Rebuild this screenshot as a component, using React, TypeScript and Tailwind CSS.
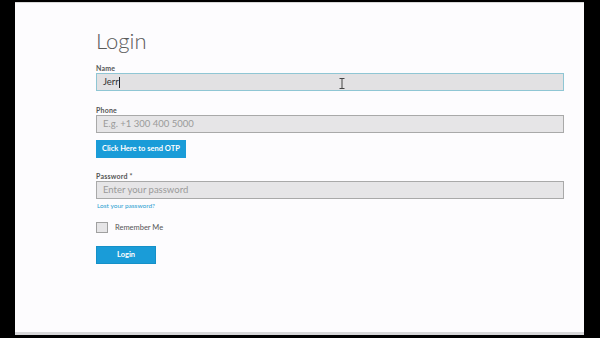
import React from "react";

function Field({ label, children }: { label: string; children: React.ReactNode }) {
  return (
    <div className="flex flex-col">
      <label className="text-[7px] font-bold leading-[8px] text-[#555] tracking-[0.2px]">{label}</label>
      {children}
    </div>
  );
}

export default function App() {
  return (
    <div className="w-[600px] h-[338px] bg-black pl-[15px] pr-[16px] pt-[2px] pb-[3px] font-['Lato','Open_Sans',sans-serif]">
      <div className="relative h-full bg-[#fdfcfe] border-t border-[#d8d8d8] border-b-[3px] border-b-[#d6d6d8] pl-[81px] pr-[20px]">
        <h1 className="mt-[25px] text-[22px] leading-[26px] font-light text-[#5a5a5a]">Login</h1>

        <div className="mt-[10px]">
          <Field label="Name">
            <div className="mt-[1px] h-[18px] bg-[#e2e1e3] border border-[#8fc6d4] flex items-center px-[6px] text-[9.5px] text-[#333]">
              Jerr<span className="inline-block w-px h-[11px] bg-[#222] ml-[0.5px]" />
            </div>
          </Field>
        </div>

        <div className="mt-[15px]">
          <Field label="Phone">
            <div className="mt-[1px] h-[18px] bg-[#e6e5e7] border border-[#a9a9a9] flex items-center px-[6px] text-[9.5px] text-[#9a9a9a]">
              E.g. +1 300 400 5000
            </div>
          </Field>
        </div>

        <button className="mt-[5px] h-[18px] px-[6px] bg-[#1a9cd8] text-white text-[7.5px] font-bold">
          Click Here to send OTP
        </button>

        <div className="mt-[14px]">
          <Field label="Password *">
            <div className="mt-[1px] h-[18px] bg-[#e6e5e7] border border-[#a9a9a9] flex items-center px-[6px] text-[9.5px] text-[#9a9a9a]">
              Enter your password
            </div>
          </Field>
        </div>

        <a className="block mt-[3px] text-[6.5px] leading-[8px] text-[#2b9fd1] ml-[1px]">Lost your password?</a>

        <div className="mt-[12px] h-[11px] flex items-center">
          <div className="w-[12px] h-[11px] bg-[#e6e5e7] border border-[#a0a0a0]" />
          <span className="ml-[7px] text-[7.5px] text-[#555]">Remember Me</span>
        </div>

        <button className="mt-[13px] w-[60px] h-[18px] bg-[#1a9cd8] border border-[#1590c8] text-white text-[7.5px] font-bold">
          Login
        </button>

        <svg className="absolute left-[324px] top-[75px]" width="6" height="11" viewBox="0 0 6 11">
          <path d="M0.5 0.5h5M3 0.5v10M0.5 10.5h5" stroke="#444" strokeWidth="1" fill="none" />
        </svg>
      </div>
    </div>
  );
}
